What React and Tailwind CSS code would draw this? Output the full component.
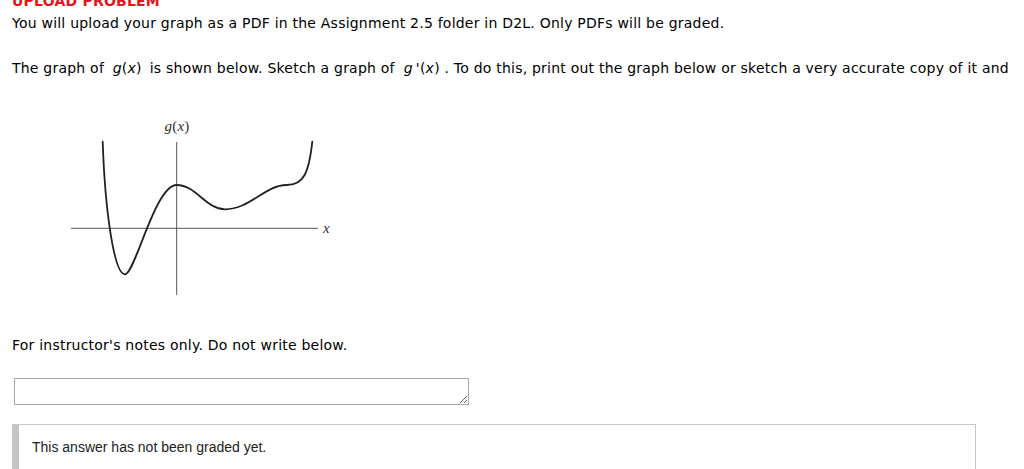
import React from 'react';

const Graph = () => (
  <svg width="280" height="190" viewBox="0 0 280 190" className="block ml-[48px]">
    <line x1="11" y1="118.3" x2="258" y2="118.3" stroke="#555" strokeWidth="1" />
    <line x1="116.7" y1="32" x2="116.7" y2="185" stroke="#555" strokeWidth="1" />
    <path
      d="M42.7 31.7 C 45 100, 54 164.3, 65 164.3 C 75 164.3, 95 75, 116.7 75 C 136 75, 146 99.3, 165 99.3 C 190 99.3, 205 75, 226.7 75 C 244 75, 249 62, 252.3 31.7"
      fill="none"
      stroke="#222"
      strokeWidth="1.8"
      strokeLinecap="round"
    />
    <text x="117" y="21" textAnchor="middle" fontFamily="Liberation Serif, serif" fontSize="15" fill="#333">
      <tspan fontStyle="italic">g</tspan>(<tspan fontStyle="italic">x</tspan>)
    </text>
    <text x="263" y="123" fontFamily="Liberation Serif, serif" fontStyle="italic" fontSize="15" fill="#333">
      x
    </text>
  </svg>
);

export default function App() {
  return (
    <div className="min-h-[469px] bg-white overflow-hidden pl-[12px] text-[14px] text-black tracking-[0.22px] font-['DejaVu_Sans',Verdana,sans-serif]">
      <p className="mt-[-9px] mb-[2px] leading-[20px] font-bold text-[#e8141c]">UPLOAD PROBLEM</p>
      <p className="leading-[20px]">
        You will upload your graph as a PDF in the Assignment 2.5 folder in D2L. Only PDFs will be graded.
      </p>
      <p className="mt-[25px] leading-[20px] whitespace-nowrap">
        The graph of <span className="italic ml-[4px]">g</span>(<span className="italic">x</span>)
        <span className="ml-[8px]">is shown below. Sketch a graph of</span>
        <span className="italic ml-[9px]">g</span>
        <span className="ml-[3px]">'(</span><span className="italic">x</span>) . To do this, print out the
        graph below or sketch a very accurate copy of it and
      </p>
      <div className="mt-[32px]">
        <Graph />
      </div>
      <p className="mt-[35px] leading-[20px]">For instructor's notes only. Do not write below.</p>
      <textarea
        className="block mt-[23px] ml-[2px] w-[455px] h-[27px] border border-[#a9a9a9] bg-white outline-none resize"
        readOnly
      />
      <div className="mt-[19px] w-[964px] h-[60px] flex border-l-[7px] border-[#c4c4c4]">
        <div className="flex-1 border-t border-r border-[#c8c8c8] pl-[13px] pt-[12px] font-['Liberation_Sans',Arial,sans-serif] text-[14px] text-[#222] tracking-normal">
          This answer has not been graded yet.
        </div>
      </div>
    </div>
  );
}
